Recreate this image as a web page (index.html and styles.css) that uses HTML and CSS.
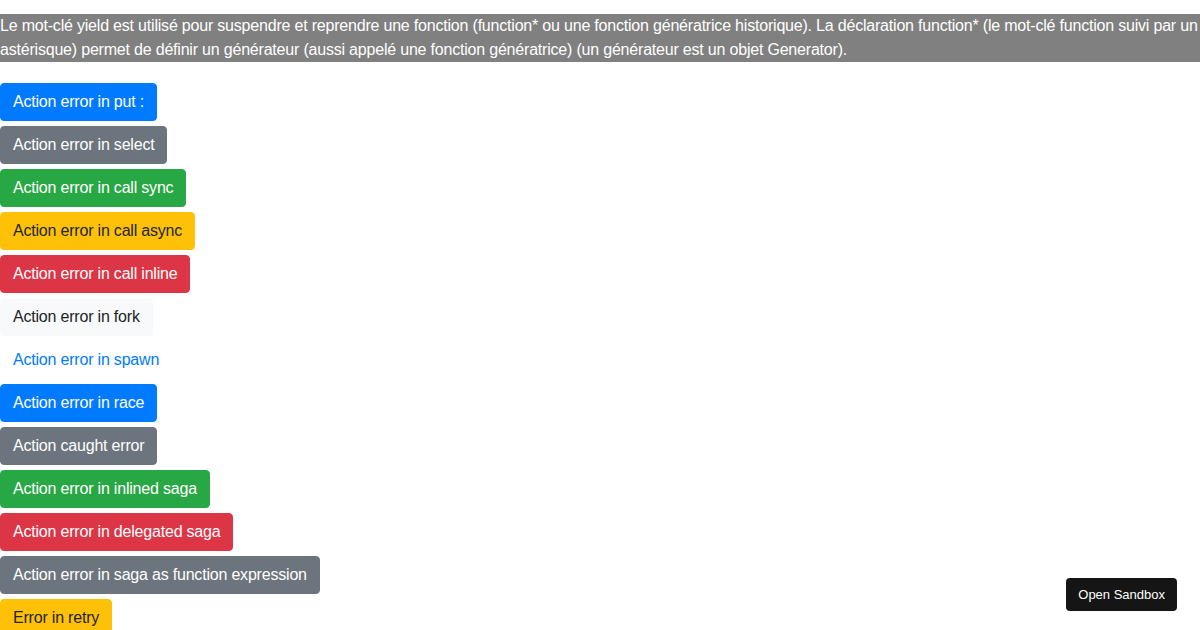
FILE: index.html
```html
<!DOCTYPE html>
<html lang="fr">
<head>
<meta charset="utf-8">
<title>Sagas</title>
<link rel="stylesheet" href="styles.css">
</head>
<body>
<p class="intro">Le mot-clé yield est utilisé pour suspendre et reprendre une fonction (function* ou une fonction génératrice historique). La déclaration function* (le mot-clé function suivi par un astérisque) permet de définir un générateur (aussi appelé une fonction génératrice) (un générateur est un objet Generator).</p>
<div class="list">
  <button class="btn btn-primary">Action error in put :</button>
  <button class="btn btn-secondary">Action error in select</button>
  <button class="btn btn-success">Action error in call sync</button>
  <button class="btn btn-warning">Action error in call async</button>
  <button class="btn btn-danger">Action error in call inline</button>
  <button class="btn btn-light">Action error in fork</button>
  <button class="btn btn-link">Action error in spawn</button>
  <button class="btn btn-primary">Action error in race</button>
  <button class="btn btn-secondary">Action caught error</button>
  <button class="btn btn-success">Action error in inlined saga</button>
  <button class="btn btn-danger">Action error in delegated saga</button>
  <button class="btn btn-secondary">Action error in saga as function expression</button>
  <button class="btn btn-warning">Error in retry</button>
</div>
<a class="sandbox" href="#">Open Sandbox</a>
</body>
</html>
```

FILE: styles.css
```css
html, body {
  margin: 0;
  padding: 0;
}
body {
  font-family: "Liberation Sans", Arial, sans-serif;
  font-size: 16px;
  letter-spacing: -0.2px;
  line-height: 24px;
  color: #212529;
  background: #fff;
  overflow: hidden;
}
.intro {
  margin: 14px 0 0;
  background: #808080;
  color: #fff;
}
.list {
  display: flex;
  flex-direction: column;
  align-items: flex-start;
  gap: 5px;
  margin-top: 21px;
}
.btn {
  font-family: inherit;
  font-size: 16px;
  letter-spacing: -0.2px;
  line-height: 24px;
  padding: 6px 12px;
  border: 1px solid transparent;
  border-radius: 4px;
  margin: 0;
  cursor: pointer;
  text-align: center;
}
.btn-primary { background: #007bff; border-color: #007bff; color: #fff; }
.btn-secondary { background: #6c757d; border-color: #6c757d; color: #fff; }
.btn-success { background: #28a745; border-color: #28a745; color: #fff; }
.btn-warning { background: #ffc107; border-color: #ffc107; color: #212529; }
.btn-danger { background: #dc3545; border-color: #dc3545; color: #fff; }
.btn-light { background: #f8f9fa; border-color: #f8f9fa; color: #212529; }
.btn-link { background: transparent; color: #007bff; }
.sandbox {
  position: fixed;
  right: 23px;
  bottom: 19px;
  background: #151515;
  color: #fff;
  font-family: "Liberation Sans", Arial, sans-serif;
  font-size: 13px;
  letter-spacing: 0;
  line-height: 15px;
  padding: 9px 12px;
  border-radius: 4px;
  text-decoration: none;
}
```
